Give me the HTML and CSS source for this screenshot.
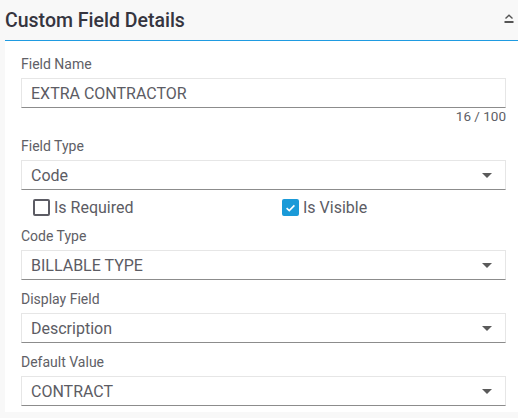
FILE: index.html
```html
<!DOCTYPE html>
<html>
<head>
<meta charset="utf-8">
<link rel="stylesheet" href="styles.css">
</head>
<body>
<div class="panel">
  <div class="panel-header">
    <h2 class="title">Custom Field Details</h2>
    <svg class="collapse" width="10" height="10" viewBox="0 0 10 10"><polyline points="1.5,4.5 5,1.2 8.5,4.5" fill="none" stroke="#555" stroke-width="1.4"/><rect x="0.5" y="7" width="9" height="2" fill="#555"/></svg>
  </div>
  <div class="card">
    <div class="field">
      <div class="label">Field Name</div>
      <div class="input">EXTRA CONTRACTOR</div>
      <div class="counter">16 / 100</div>
    </div>
    <div class="field">
      <div class="label">Field Type</div>
      <div class="input select">Code<span class="arrow"></span></div>
    </div>
    <div class="checks">
      <label class="check"><span class="box"></span>Is Required</label>
      <label class="check"><span class="box checked"><svg width="16" height="16" viewBox="0 0 16 16"><polyline points="3.2,8.2 6.5,11.3 12.8,4.8" fill="none" stroke="#fff" stroke-width="2"/></svg></span>Is Visible</label>
    </div>
    <div class="field">
      <div class="label">Code Type</div>
      <div class="input select">BILLABLE TYPE<span class="arrow"></span></div>
    </div>
    <div class="field">
      <div class="label">Display Field</div>
      <div class="input select">Description<span class="arrow"></span></div>
    </div>
    <div class="field last">
      <div class="label">Default Value</div>
      <div class="input select">CONTRACT<span class="arrow"></span></div>
    </div>
  </div>
</div>
</body>
</html>
```

FILE: styles.css
```css
html, body {
  margin: 0;
  padding: 0;
  background: #f8f8f8;
  font-family: Roboto, "Liberation Sans", sans-serif;
  color: #555;
}
.panel {
  padding-left: 5px;
}
.panel-header {
  height: 40px;
  display: flex;
  align-items: center;
  justify-content: space-between;
  border-bottom: 1px solid #1f9be1;
  padding-right: 4px;
}
.title {
  margin: 0;
  font-size: 19.5px;
  font-weight: 500;
  color: #35353f;
}
.collapse {
  display: block;
  margin-top: -3px;
}
.card {
  background: #fff;
  padding: 13px 12px 6px 16px;
}
.field {
  margin-bottom: 9px;
}
.field.last {
  margin-bottom: 0;
}
.label {
  font-size: 14px;
  line-height: 20px;
  color: #606066;
  margin-bottom: 4px;
}
.input {
  box-sizing: border-box;
  height: 30px;
  border: 1px solid #e6e6e6;
  border-bottom-color: #8c8c8c;
  padding: 0 9px;
  display: flex;
  align-items: center;
  font-size: 16px;
  color: #5c5c64;
  position: relative;
}
.arrow {
  position: absolute;
  right: 13px;
  top: 12px;
  width: 0;
  height: 0;
  border-left: 5px solid transparent;
  border-right: 5px solid transparent;
  border-top: 5px solid #5a5a5a;
}
.counter {
  text-align: right;
  font-size: 13.5px;
  line-height: 16px;
  margin-bottom: 12px;
  color: #606066;
}
.checks {
  display: grid;
  grid-template-columns: 249px 1fr;
  padding-left: 12px;
  margin: 7px 0 10px;
  height: 17px;
}
.check {
  display: flex;
  align-items: center;
  font-size: 16px;
  color: #5c5c64;
  line-height: 17px;
}
.box {
  box-sizing: border-box;
  width: 17px;
  height: 17px;
  border: 2px solid #5c5c64;
  border-radius: 2px;
  margin-right: 4px;
  display: flex;
  align-items: center;
  justify-content: center;
}
.box.checked {
  background: #1a9ad8;
  border-color: #1a9ad8;
}
.box svg {
  display: block;
}
```
